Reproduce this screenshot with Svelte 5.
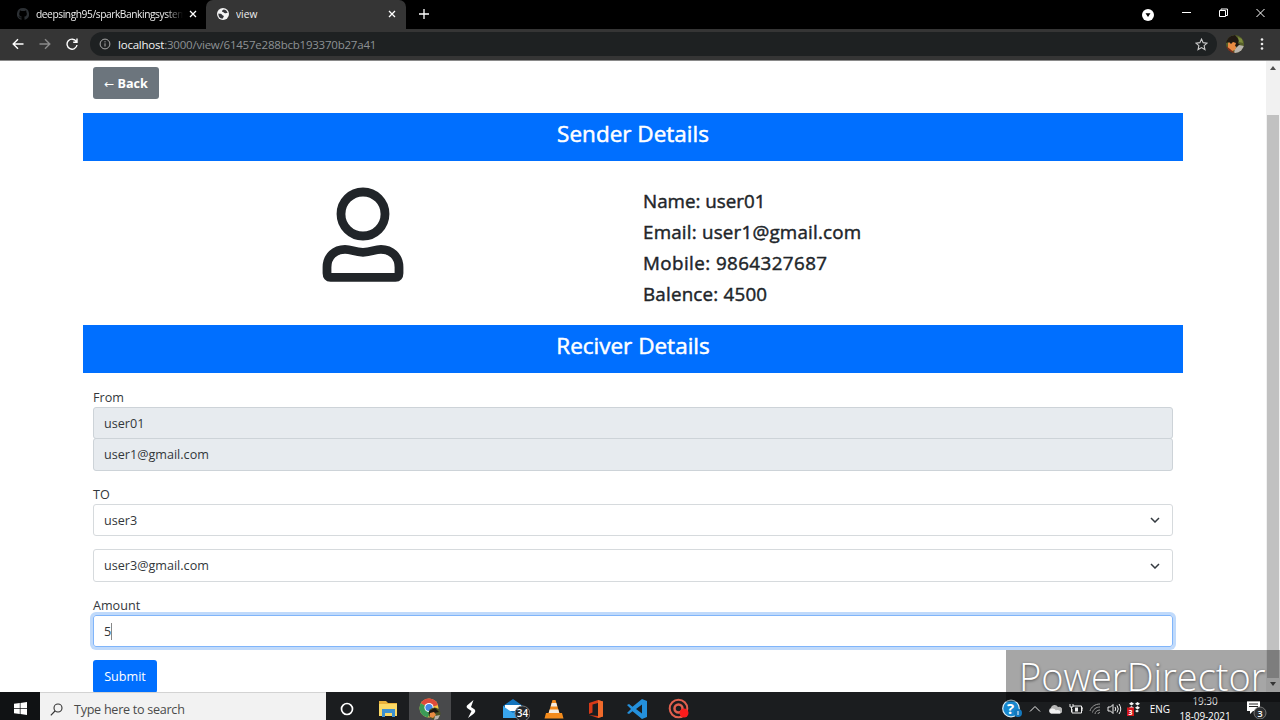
<script lang="ts">
  type Line = { label: string; value: string; spacing: number };

  const sender: Line[] = [
    { label: 'Name', value: 'user01', spacing: 0 },
    { label: 'Email', value: 'user1@gmail.com', spacing: 0.2 },
    { label: 'Mobile', value: '9864327687', spacing: 0.42 },
    { label: 'Balence', value: '4500', spacing: 0.2 }
  ];

  const receivers = ['user3', 'user3@gmail.com'];

  let amount = $state('5');
</script>

<div class="screen">
  <header class="tabs">
    <div class="tab">
      <svg class="favicon" viewBox="0 0 16 16" fill="#2c3034">
        <path d="M8 0a8 8 0 0 0-2.53 15.59c.4.07.55-.17.55-.38v-1.49c-2.01.37-2.53-.49-2.69-.94-.09-.23-.48-.94-.82-1.13-.28-.15-.68-.52-.01-.53.63-.01 1.08.58 1.23.82.72 1.21 1.87.87 2.33.66.07-.52.28-.87.51-1.07-1.78-.2-3.64-.89-3.64-3.95 0-.87.31-1.59.82-2.15-.08-.2-.36-1.02.08-2.12 0 0 .67-.21 2.2.82a7.4 7.4 0 0 1 4 0c1.53-1.04 2.2-.82 2.2-.82.44 1.1.16 1.92.08 2.12.51.56.82 1.27.82 2.15 0 3.07-1.87 3.75-3.65 3.95.29.25.54.73.54 1.48v2.2c0 .21.15.46.55.38A8 8 0 0 0 8 0z" />
      </svg>
      <span class="tab-title faded">deepsingh95/sparkBankingsystem</span>
      <svg class="close" viewBox="0 0 8 8"><path d="M1 1l6 6M7 1L1 7" /></svg>
    </div>
    <div class="tab active">
      <svg class="favicon" viewBox="0 0 12 12">
        <circle cx="6" cy="6" r="6" fill="#f4f4f4" />
        <path d="M1.4 5.5c2 .2 3 .2 3.6 1.2s1.6.2 1.8 1.6c.1.9-.8 1.1-.9 2.300C3 10.800 1.200 8.700 1.400 5.500zM6.500 1.500c-.4.8-1.700.8-1.500 1.800s1.300.4 1.700 1.200 1.800.9 3.900.6C10.200 3 8.700 1.600 6.500 1.500z" fill="#35363a" />
      </svg>
      <span class="tab-title">view</span>
      <svg class="close" viewBox="0 0 8 8"><path d="M1 1l6 6M7 1L1 7" /></svg>
    </div>
    <svg class="new-tab" viewBox="0 0 10 10"><path d="M5 0v10M0 5h10" /></svg>
    <div class="window-controls">
      <svg width="12" height="12" viewBox="0 0 12 12"><circle cx="6" cy="6" r="6" fill="#fff" /><path d="M3.500 4.300h5L6 8z" fill="#000" /></svg>
      <svg width="9" height="12" viewBox="0 0 9 12"><path d="M0 5.500h9" /></svg>
      <svg width="9" height="10" viewBox="0 0 9 10"><path d="M.5 2.500h6v6h-6zM2 2.500V1h6.500v6.500h-2" /></svg>
      <svg width="9" height="10" viewBox="0 0 9 10"><path d="M.5 1l8 8M8.500 1l-8 8" /></svg>
    </div>
  </header>

  <nav class="toolbar">
    <svg class="nav-icon" viewBox="0 0 12 12"><path d="M11.500 6H1.200M6 1.200L1.200 6 6 10.800" /></svg>
    <svg class="nav-icon dim" viewBox="0 0 12 12"><path d="M.5 6h10.300M6 1.200L10.800 6 6 10.800" /></svg>
    <svg class="nav-icon" viewBox="0 0 12 12"><path d="M10.300 3.500A5 5 0 1 0 11 7M11 .5v3.800H7.200" /></svg>
    <div class="address">
      <svg class="info" viewBox="0 0 12 12"><circle cx="6" cy="6" r="4.900" /><path d="M6 5.300v3.200M6 3.200v1.200" /></svg>
      <span class="url"><b>localhost</b>:3000/view/61457e288bcb193370b27a41</span>
      <svg class="star" viewBox="0 0 12 12"><path d="M6 1l1.500 3.300 3.600.4-2.700 2.400.8 3.600L6 8.900l-3.200 1.800.8-3.600L.9 4.700l3.600-.4z" /></svg>
    </div>
    <svg class="avatar" viewBox="0 0 18 18">
      <defs><clipPath id="face"><circle cx="9" cy="9" r="9" /></clipPath></defs>
      <g clip-path="url(#face)">
        <path d="M0 0h18v18H0z" fill="#56602a" />
        <path d="M2 8l5-3 4 3-1 5-5 3-3-2z" fill="#e98a42" />
        <path d="M0 4l3-3 6-1 4 5-1 3 2 2-3 2-2-1 1-3-3-1-2 2-2-2-3 1z" fill="#211913" />
        <path d="M9 14l4-4 5 1v7H8z" fill="#b9b4ae" />
        <path d="M0 11l4 3 5 4H0z" fill="#7d2a1a" />
        <path d="M5 13l5-1-1 3-3 1z" fill="#e98a42" />
        <path d="M12 2l4 2 1 4-4-1z" fill="#7f8c3e" />
      </g>
    </svg>
    <svg class="dots" viewBox="0 0 4 12"><circle cx="2" cy="1.500" r="1.300" /><circle cx="2" cy="6" r="1.300" /><circle cx="2" cy="10.500" r="1.300" /></svg>
  </nav>

  <div class="viewport">
    <main class="page">
      <button class="btn back" type="button"><span>←</span> Back</button>

      <h3 class="banner">Sender Details</h3>
      <section class="sender">
        <div class="portrait">
          <svg width="84" height="96" viewBox="0 0 84 96">
            <circle cx="42" cy="27" r="22" />
            <path d="M9.500 90.300h65q3.500 0 3.500-4v-6c0-11-8-18-18-18-7 0-9 3-18 3s-11-3-18-3c-10 0-18 7-18 18v6q0 4 3.500 4z" />
          </svg>
        </div>
        <div class="details">
          {#each sender as line (line.label)}
            <h5 style:letter-spacing="{line.spacing}px">{line.label}: {line.value}</h5>
          {/each}
        </div>
      </section>

      <h3 class="banner">Reciver Details</h3>
      <form class="transfer">
        <span class="label">From</span>
        <div class="field disabled">user01</div>
        <div class="field disabled">user1@gmail.com</div>
        <span class="label to">TO</span>
        {#each receivers as receiver (receiver)}
          <div class="field select">
            {receiver}
            <svg viewBox="0 0 10 6"><path d="M1 1l4 4 4-4" /></svg>
          </div>
        {/each}
        <span class="label amount">Amount</span>
        <div class="field focused">{amount}<i class="caret"></i></div>
        <button class="btn submit" type="button">Submit</button>
      </form>
    </main>
    <div class="scrollbar">
      <svg viewBox="0 0 6 4"><path d="M0 4l3-4 3 4z" /></svg>
      <div class="thumb"></div>
      <svg viewBox="0 0 6 4"><path d="M0 0l3 4 3-4z" /></svg>
    </div>
  </div>

  <footer class="taskbar">
    <div class="start">
      <svg width="13" height="13" viewBox="0 0 13 13" fill="#fff"><path d="M0 1.800L5.800 1v5.200H0zM6.500.9L13 0v6.200H6.500zM0 6.900h5.800v5.200L0 11.300zM6.500 6.900H13V13l-6.500-.9z" /></svg>
    </div>
    <div class="search">
      <svg width="13" height="13" viewBox="0 0 13 13"><circle cx="8" cy="5" r="4" /><path d="M5 8L.8 12.300" /></svg>
      <span>Type here to search</span>
    </div>
    <div class="app">
      <svg width="14" height="14" viewBox="0 0 14 14"><circle cx="7" cy="7" r="5.500" fill="none" stroke="#fff" stroke-width="1.700" /></svg>
    </div>
    <div class="app">
      <svg width="20" height="18" viewBox="0 0 20 18">
        <path d="M1 1h7l2 2h9v13H1z" fill="#e9b13b" />
        <path d="M1 4h18v12H1z" fill="#fbd966" />
        <path d="M4 9h13v8h-3v-4H7v4H4z" fill="#3c91d0" />
      </svg>
    </div>
    <div class="app current">
      <svg width="22" height="22" viewBox="0 0 22 22">
        <circle cx="10" cy="10" r="9.500" fill="#f6c544" />
        <path d="M10 10L1.800 5.200A9.500 9.500 0 0 1 19 7z" fill="#df4b3c" />
        <path d="M10 10L1.800 5.200A9.500 9.500 0 0 0 9 19.500L12 12z" fill="#3b9b57" />
        <circle cx="10" cy="9.500" r="4.600" fill="#fff" />
        <circle cx="10" cy="9.500" r="3.600" fill="#4588e8" />
        <circle cx="15.500" cy="15.500" r="6" fill="#4d5524" />
        <path d="M10 13l6-3 4 4-5 1-5 1z" fill="#1a1511" />
        <path d="M11 15l4-1 2 3-3 3-3-1z" fill="#e98a42" />
        <path d="M16 18l5-1-2 4-4 1z" fill="#b9b4ae" />
      </svg>
    </div>
    <div class="app">
      <svg width="12" height="20" viewBox="0 0 12 20" fill="#fff"><path d="M8.500 1L2 6.500c-1 1.500 0 2.500 1.500 3.500l3 2-3.500 7L9 14.500c2-2 1.500-3.500 0-4.500L6 8z" /></svg>
    </div>
    <div class="app">
      <svg class="mail" width="30" height="22" viewBox="0 0 30 22">
        <path d="M3 8l10-7 10 7v11H3z" fill="#1474bd" />
        <path d="M5 7h16v6H5z" fill="#fff" />
        <path d="M3 8l10 7 10-7v12H3z" fill="#39a5ec" />
        <circle cx="22.500" cy="15.500" r="7.500" fill="#23272b" stroke="#777" />
        <text x="22.500" y="19.300" text-anchor="middle" font-size="10" font-weight="600" fill="#fff">34</text>
      </svg>
    </div>
    <div class="app">
      <svg width="20" height="20" viewBox="0 0 20 20">
        <path d="M2 14h16l1.500 5.500H.5z" fill="#f38b1c" />
        <path d="M8.500 1h3L16 16q-6 2-12 0z" fill="#f38b1c" />
        <path d="M7.700 4h4.600l1 3.500H6.700zM5.700 10.500h8.600l1 3.500H4.700z" fill="#f4ece2" />
      </svg>
    </div>
    <div class="app">
      <svg width="16" height="20" viewBox="0 0 16 20"><path d="M1 4l9-3 5 1.500v15L10 19l-9-3 9 1V4L4.500 5.500v8L1 15z" fill="#d83a18" /><path d="M10 1l5 1.500v15L10 19z" fill="#f06a2b" /></svg>
    </div>
    <div class="app">
      <svg width="20" height="20" viewBox="0 0 20 20"><path d="M15 0l5 2v16l-5 2L5.500 12.200 2 15 0 14l4-4-4-4 2-1 3.500 2.800zM15 5.500L9 10l6 4.500z" fill="#2490dc" fill-rule="evenodd" /></svg>
    </div>
    <div class="app">
      <svg width="22" height="22" viewBox="0 0 22 22"><circle cx="10.500" cy="10.500" r="8.800" fill="none" stroke="#e2604e" stroke-width="2" /><circle cx="10.500" cy="10.500" r="4" fill="none" stroke="#e2604e" stroke-width="2.500" /><circle cx="16" cy="15" r="4.500" fill="#fb1c1c" /></svg>
    </div>

    <div class="tray">
      <svg width="20" height="20" viewBox="0 0 20 20"><circle cx="9" cy="9.500" r="8.300" fill="#1688cf" stroke="#d6eaf5" stroke-width="1.200" /><text x="8.700" y="15" text-anchor="middle" font-size="15" font-weight="700" fill="#fff">?</text><circle cx="16" cy="14" r="4" fill="#1479be" /><path d="M16 12v4" stroke="#fff" /></svg>
      <svg class="line" width="12" height="12" viewBox="0 0 12 12"><path d="M1 8.500l5-5 5 5" /></svg>
      <svg width="14" height="12" viewBox="0 0 14 12"><path d="M3 10.500a3 3 0 0 1-.3-5.500A4 4 0 0 1 10 4a3 3 0 0 1 2 6.500z" fill="#b5b5b5" /><path d="M3 10.500a2.500 2.500 0 0 1-.3-4.500c3-1 4 0 5.300 1.500 2-1 4-.5 4.500 2l-.5 1z" fill="#f2f2f2" /></svg>
      <svg class="line" width="14" height="12" viewBox="0 0 14 12"><path d="M4 3h8.500v7H3V6M12.500 5H14v3M1 1v3h3V1M2.500 4v5" /><path d="M6 4.500h3v4H6z" fill="#eee" stroke="none" /></svg>
      <svg class="line wifi" width="12" height="12" viewBox="0 0 12 12"><path d="M1 8C2 4 6 1 11 1M3.500 9.500C4 6.500 7 4 11 4M6 11c0-2 2-4 5-4M9 11q0-1.500 2-1.500" /></svg>
      <svg class="line volume" width="15" height="12" viewBox="0 0 15 12"><path d="M1 4h2.500L6 1.500v9L3.500 8H1zM8 4q1.500 2 0 4M10 2.500q2.500 3.500 0 7M12 1q3.500 5 0 10" /></svg>
      <svg class="dropbox" width="14" height="14" viewBox="0 0 14 14"><path d="M4.500 0L7 1.700 4.500 3.400 2 1.700zM10.500 0L13 1.700l-2.500 1.700L8 1.700zM4.500 4L7 5.700 4.500 7.400 2 5.700zM10.500 4L13 5.700l-2.500 1.700L8 5.700zM8 9l2-1.200L12 9l-2 1.500z" fill="#f5f5f5" /><path d="M0 5.500h7V14H0z" fill="#d4161c" /><text x="3.500" y="12.500" text-anchor="middle" font-size="7" font-weight="700" fill="#fff">3</text></svg>
      <span class="lang">ENG</span>
      <div class="clock"><span>19:30</span><span>18-09-2021</span></div>
      <svg width="22" height="20" viewBox="0 0 22 20"><path d="M1 2h13v10H7l-3 3v-3H1z" fill="#fff" /><path d="M3 5h9M3 7.500h9" stroke="#222" /><circle cx="14" cy="14" r="6" fill="#2d2f31" stroke="#777" /><text x="14" y="17.500" text-anchor="middle" font-size="9" font-weight="600" fill="#fff">3</text></svg>
    </div>
  </footer>

  <div class="watermark">PowerDirector</div>
</div>

<style>
  :global(body) {
    margin: 0;
    overflow: hidden;
  }

  .screen {
    position: relative;
    width: 1280px;
    height: 720px;
    display: flex;
    flex-direction: column;
    overflow: hidden;
    font-family: 'Open Sans', 'Noto Sans', sans-serif;
    font-size: 12.6px;
    color: #212529;
    background: #fff;
  }

  .screen * {
    box-sizing: border-box;
  }

  svg {
    display: block;
    flex: none;
  }

  .tabs {
    height: 29px;
    flex: none;
    display: flex;
    align-items: center;
    background: #000;
    color: #eee;
    font-size: 10.2px;
  }

  .tab {
    width: 206px;
    height: 29px;
    display: flex;
    align-items: center;
    padding: 0 9px 1px 17px;
  }

  .tab.active {
    width: 200px;
    padding: 0 10px 1px 11px;
    border-radius: 7px 7px 0 0;
    background: #353535;
  }

  .favicon {
    width: 12px;
    height: 12px;
  }

  .tab-title {
    flex: 1;
    margin-left: 7px;
    overflow: hidden;
    white-space: nowrap;
  }

  .faded {
    margin-right: 6px;
    letter-spacing: -0.42px;
    mask-image: linear-gradient(to right, #000 88%, transparent);
  }

  .close {
    width: 8px;
    height: 8px;
  }

  .close path,
  .new-tab path {
    stroke: #fff;
    stroke-width: 1.3;
  }

  .new-tab {
    width: 10px;
    height: 10px;
    margin-left: 13px;
    margin-top: -1px;
  }

  .window-controls {
    display: flex;
    align-items: center;
    gap: 28px;
    margin: -4px 15px 0 auto;
  }

  .window-controls svg:first-child {
    margin: 4px 0 0;
  }

  .window-controls path {
    fill: none;
    stroke: #fff;
  }

  .window-controls svg:first-child path {
    fill: #000;
    stroke: none;
  }

  .toolbar {
    height: 32px;
    flex: none;
    display: flex;
    align-items: center;
    padding: 0 16px 1px 12px;
    background: #353535;
    border-bottom: 1px solid #8a8a8a;
  }

  .nav-icon {
    width: 12px;
    height: 12px;
    margin-right: 15px;
    fill: none;
    stroke: #fff;
    stroke-width: 1.4;
  }

  .nav-icon.dim {
    stroke: #8b8b8b;
  }

  .address {
    width: 1127px;
    height: 24px;
    display: flex;
    align-items: center;
    margin-left: -3px;
    padding: 0 9px;
    border-radius: 12px;
    background: #1e2122;
  }

  .info,
  .star {
    width: 12px;
    height: 12px;
    fill: none;
    stroke: #a9a9a9;
  }

  .star {
    width: 13px;
    height: 13px;
    margin-left: auto;
    stroke: #ccc;
  }

  .url {
    margin-left: 7px;
    font-size: 11.5px;
    letter-spacing: -0.22px;
    color: #8d9194;
  }

  .url b {
    font-weight: 400;
    color: #f2f2f2;
  }

  .avatar {
    width: 18px;
    height: 18px;
    margin-left: 9px;
  }

  .dots {
    width: 4px;
    height: 12px;
    margin-left: auto;
    fill: #eee;
  }

  .viewport {
    height: 631px;
    flex: none;
    display: flex;
    justify-content: space-between;
    overflow: hidden;
  }

  .page {
    width: 1100px;
    margin-left: 83px;
    padding-top: 6px;
  }

  .btn {
    display: block;
    border: 0;
    border-radius: 3px;
    padding: 0;
    color: #fff;
    font: inherit;
    text-align: center;
  }

  .back {
    width: 66px;
    height: 32px;
    margin: 0 0 14px 10px;
    padding-top: 1px;
    background: #6c757d;
    font-weight: 700;
  }

  .back span {
    font-family: 'DejaVu Sans', sans-serif;
    font-size: 12px;
    font-weight: 400;
  }

  .banner {
    height: 48px;
    margin: 0;
    padding-top: 5px;
    background: #006fff;
    color: #fff;
    font-size: 22.5px;
    font-weight: 400;
    line-height: 32px;
    text-align: center;
    -webkit-text-stroke: 0.5px;
  }

  .sender {
    height: 164px;
    display: flex;
  }

  .portrait {
    width: 560px;
    display: flex;
    justify-content: center;
    padding-top: 26px;
  }

  .portrait svg {
    fill: none;
    stroke: #212529;
    stroke-width: 8.800;
  }

  .details {
    padding-top: 25px;
  }

  h5 {
    margin: 0;
    font-size: 18.8px;
    font-weight: 400;
    line-height: 31px;
    white-space: nowrap;
    -webkit-text-stroke: 0.45px;
  }

  .transfer {
    display: flex;
    flex-direction: column;
    padding: 15px 10px 0;
  }

  .label {
    height: 19px;
    line-height: 19px;
    color: #33373b;
  }

  .field {
    height: 32px;
    flex: none;
    display: flex;
    align-items: center;
    padding: 0 10px;
    border: 1px solid #d6dadd;
    border-radius: 3px;
    color: #33373b;
  }

  .disabled {
    background: #e7ebef;
    border-color: #cdd3d8;
  }

  .disabled + .disabled {
    height: 33px;
    margin-top: -1px;
  }

  .to {
    margin-top: 14px;
  }

  .select {
    justify-content: space-between;
    margin-bottom: 13px;
  }

  .select + .select {
    height: 33px;
    margin-bottom: 14px;
  }

  .select svg {
    width: 10px;
    height: 6px;
    margin-right: 2px;
    fill: none;
    stroke: #343a40;
    stroke-width: 1.5;
  }

  .focused {
    border-color: #80b5fa;
    box-shadow: 0 0 0 3px #c0dafb;
  }

  .caret {
    width: 1px;
    height: 17px;
    background: #888;
  }

  .submit {
    width: 64px;
    height: 33px;
    margin-top: 13px;
    background: #006fff;
  }

  .scrollbar {
    width: 14px;
    display: flex;
    flex-direction: column;
    align-items: center;
    padding: 5px 0;
    background: #f1f1f1;
  }

  .scrollbar svg {
    width: 6px;
    height: 4px;
    fill: #505050;
  }

  .thumb {
    width: 12px;
    height: 563px;
    margin: 45px 0 4px;
    background: #c1c1c1;
  }

  .taskbar {
    height: 33px;
    flex: none;
    display: flex;
    background: #1b1d1f;
    color: #fff;
  }

  .start,
  .app {
    width: 41.5px;
    display: flex;
    align-items: center;
    justify-content: center;
  }

  .start {
    width: 40px;
    background: #101214;
  }

  .search {
    width: 286px;
    display: flex;
    align-items: center;
    gap: 11px;
    padding-left: 10px;
    border-top: 1px solid #d3d3d3;
    background: #f2f2f2;
    color: #4a4a4a;
    letter-spacing: -0.28px;
  }

  .search svg {
    fill: none;
    stroke: #333;
    stroke-width: 1.1;
  }

  .current {
    background: #48494b;
  }

  .mail {
    margin-left: 4px;
  }

  .tray {
    display: flex;
    align-items: center;
    gap: 7px;
    margin-left: auto;
    padding-right: 12px;
    font-size: 10px;
  }

  .line {
    fill: none;
    stroke: #eee;
  }

  .wifi {
    margin-left: -1px;
    stroke: #999;
  }

  .volume {
    margin-left: -1px;
  }

  .dropbox {
    margin-left: -2px;
  }

  .lang {
    margin-left: 2px;
  }

  .clock {
    width: 52px;
    display: flex;
    flex-direction: column;
    align-items: center;
    margin: 0 8px 0 2px;
    line-height: 15px;
    letter-spacing: -0.1px;
    white-space: nowrap;
  }

  .watermark {
    position: absolute;
    right: 0;
    top: 650px;
    width: 274px;
    height: 52px;
    padding-left: 13px;
    background: rgba(0, 0, 0, 0.35);
    color: #fff;
    font-family: 'Open Sans', sans-serif;
    font-size: 38px;
    font-weight: 300;
    line-height: 52px;
    text-shadow: 0 1px 3px rgba(0, 0, 0, 0.6);
    white-space: nowrap;
  }
</style>
